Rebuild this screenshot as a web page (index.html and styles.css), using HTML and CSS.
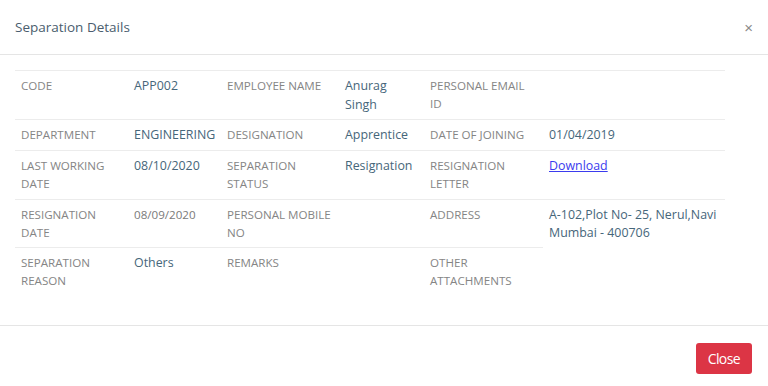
FILE: index.html
```html
<!DOCTYPE html>
<html lang="en">
<head>
    <meta charset="UTF-8">
    <meta name="viewport" content="width=device-width, initial-scale=1.0">
    <title>Separation Details</title>
    <link rel="stylesheet" href="styles.css">
</head>
<body>
    <div class="modal">
        <div class="modal-header">
            <h5 class="modal-title">Separation Details</h5>
            <button class="close-x">&times;</button>
        </div>
        <div class="modal-body">
            <table class="details">
                <colgroup>
                    <col style="width:113px">
                    <col style="width:93px">
                    <col style="width:118px">
                    <col style="width:85px">
                    <col style="width:119px">
                    <col>
                </colgroup>
                <tr>
                    <th>CODE</th>
                    <td>APP002</td>
                    <th>EMPLOYEE NAME</th>
                    <td>Anurag Singh</td>
                    <th>PERSONAL EMAIL ID</th>
                    <td></td>
                </tr>
                <tr>
                    <th>DEPARTMENT</th>
                    <td>ENGINEERING</td>
                    <th>DESIGNATION</th>
                    <td>Apprentice</td>
                    <th>DATE OF JOINING</th>
                    <td>01/04/2019</td>
                </tr>
                <tr>
                    <th>LAST WORKING DATE</th>
                    <td>08/10/2020</td>
                    <th>SEPARATION STATUS</th>
                    <td>Resignation</td>
                    <th>RESIGNATION LETTER</th>
                    <td><a href="#">Download</a></td>
                </tr>
                <tr>
                    <th>RESIGNATION DATE</th>
                    <td class="small">08/09/2020</td>
                    <th>PERSONAL MOBILE NO</th>
                    <td></td>
                    <th>ADDRESS</th>
                    <td rowspan="2">A-102,Plot No- 25, Nerul,Navi Mumbai - 400706</td>
                </tr>
                <tr>
                    <th>SEPARATION REASON</th>
                    <td>Others</td>
                    <th>REMARKS</th>
                    <td></td>
                    <th>OTHER ATTACHMENTS</th>
                </tr>
            </table>
        </div>
        <div class="modal-footer">
            <button class="btn-close">Close</button>
        </div>
    </div>
</body>
</html>
```

FILE: styles.css
```css
body {
    margin: 0;
    font-family: "Open Sans", Arial, sans-serif;
    background: #fff;
}
.modal {
    width: 768px;
}
.modal-header {
    display: flex;
    align-items: center;
    justify-content: space-between;
    height: 55px;
    padding: 0 15px;
    border-bottom: 1px solid #e5e5e5;
    box-sizing: border-box;
}
.modal-title {
    margin: 0;
    font-size: 13.5px;
    font-weight: 400;
    color: #4a5d6e;
}
.close-x {
    border: none;
    background: none;
    padding: 0;
    font-size: 15px;
    color: #8a8a8a;
    cursor: pointer;
}
.modal-body {
    padding: 15px 15px 30px;
}
.details {
    width: 710px;
    border-collapse: collapse;
    table-layout: fixed;
}
.details th,
.details td {
    text-align: left;
    vertical-align: top;
    padding: 6px 6px 5.4px;
    border-top: 1px solid #ececec;
}
.details th {
    font-weight: 400;
    font-size: 11.6px;
    line-height: 18px;
    color: #858585;
}
.details td {
    font-size: 12.4px;
    line-height: 18.5px;
    color: #46667a;
}
.details td.small {
    font-size: 11.6px;
    color: #7a7a7a;
}
.details a {
    color: #3b3bee;
    text-decoration: underline;
}
.modal-footer {
    display: flex;
    justify-content: flex-end;
    padding: 17px 16px 0;
    border-top: 1px solid #e5e5e5;
}
.btn-close {
    background: #dc3545;
    color: #fff;
    border: none;
    border-radius: 3px;
    height: 31px;
    padding: 0 12px;
    font-family: "Open Sans", Arial, sans-serif;
    font-size: 14px;
    letter-spacing: -0.6px;
    cursor: pointer;
}
```
